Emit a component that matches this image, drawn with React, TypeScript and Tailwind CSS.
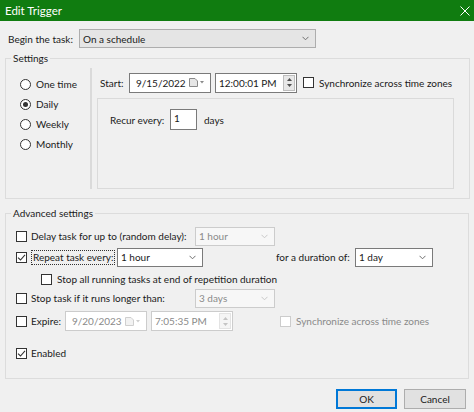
import React from 'react';
import clsx from 'clsx';

function Chevron({ disabled }: { disabled?: boolean }) {
  return (
    <svg width="7" height="5" viewBox="0 0 7 5" className="shrink-0">
      <path d="M0.5 0.8 L3.5 3.8 L6.5 0.8" fill="none" stroke={disabled ? '#c8c8c8' : '#707070'} strokeWidth="1" />
    </svg>
  );
}

function Checkbox({ checked, disabled }: { checked?: boolean; disabled?: boolean }) {
  return (
    <span
      className={clsx(
        'inline-flex h-[11px] w-[11px] shrink-0 items-center justify-center border bg-white',
        disabled ? 'border-[#cccccc]' : 'border-[#333333]'
      )}
    >
      {checked && (
        <svg viewBox="0 0 9 9" className="h-[9px] w-[9px]">
          <path d="M1 4.6 L3.5 7 L8 1.8" fill="none" stroke="#333333" strokeWidth="1.1" />
        </svg>
      )}
    </span>
  );
}

function Radio({ checked }: { checked?: boolean }) {
  return (
    <span className="inline-flex h-[11px] w-[11px] shrink-0 items-center justify-center rounded-full border border-[#333333] bg-white">
      {checked && <span className="h-[5px] w-[5px] rounded-full bg-[#333333]" />}
    </span>
  );
}

function Combo({ value, variant, className }: { value: string; variant: 'list' | 'edit' | 'disabled'; className?: string }) {
  return (
    <div
      className={clsx(
        'flex h-[19px] items-center justify-between border pl-[3px] pr-[6px]',
        variant === 'list' && 'border-[#adadad] bg-[#e5e5e5] text-[#1a1a1a]',
        variant === 'edit' && 'border-[#7a7a7a] bg-white text-[#1a1a1a]',
        variant === 'disabled' && 'border-[#cccccc] bg-[#f7f7f7] text-[#8a8a8a]',
        className
      )}
    >
      <span>{value}</span>
      <Chevron disabled={variant === 'disabled'} />
    </div>
  );
}

function DateBox({ value, disabled }: { value: string; disabled?: boolean }) {
  const c = disabled ? '#cfcfcf' : '#8a8a8a';
  return (
    <div
      className={clsx(
        'flex h-[20px] w-[82px] items-center justify-between border bg-white pl-[6px] pr-[5px]',
        disabled ? 'border-[#cccccc] text-[#8a8a8a]' : 'border-[#7a7a7a] text-[#1a1a1a]'
      )}
    >
      <span>{value}</span>
      <svg width="16" height="9" viewBox="0 0 16 9" className="shrink-0">
        <path d="M0.5 0.5 H6 L8.5 3 V8.5 H0.5 Z" fill={disabled ? '#f2f2f2' : '#e6e6e6'} stroke={c} strokeWidth="1" />
        <path d="M11 3 L15 3 L13 5.5 Z" fill={c} />
      </svg>
    </div>
  );
}

function TimeBox({ value, disabled }: { value: string; disabled?: boolean }) {
  const c = disabled ? '#c4c4c4' : '#505050';
  return (
    <div
      className={clsx(
        'flex h-[20px] w-[82px] items-center justify-between border bg-white pl-[3px] pr-[1px]',
        disabled ? 'border-[#cccccc] text-[#8a8a8a]' : 'border-[#7a7a7a] text-[#1a1a1a]'
      )}
    >
      <span>{value}</span>
      <div
        className={clsx(
          'flex h-[16px] w-[12px] flex-col items-center justify-center gap-[3px] border',
          disabled ? 'border-[#e3e3e3] bg-[#f5f5f5]' : 'border-[#bdbdbd] bg-[#e8e8e8]'
        )}
      >
        <svg width="5" height="3" viewBox="0 0 5 3">
          <path d="M0 3 L2.5 0 L5 3 Z" fill={c} />
        </svg>
        <svg width="5" height="3" viewBox="0 0 5 3">
          <path d="M0 0 L5 0 L2.5 3 Z" fill={c} />
        </svg>
      </div>
    </div>
  );
}

export default function App() {
  return (
    <div className="h-[412px] w-[474px] overflow-hidden bg-[#f0f0f0] font-['Lato',sans-serif] text-[10px] leading-[14px] text-[#1a1a1a]">
      <div className="flex h-[21px] items-center justify-between bg-[#107c10] pl-[5px] pr-[4px] text-[11.5px] text-white">
        <span>Edit Trigger</span>
        <svg width="10" height="10" viewBox="0 0 10 10">
          <path d="M0.5 0.5 L9.5 9.5 M9.5 0.5 L0.5 9.5" stroke="white" strokeWidth="1" />
        </svg>
      </div>

      <div className="px-[5px]">
        <div className="mt-[8px] flex h-[19px] items-center">
          <span className="w-[74px] pl-[3px]">Begin the task:</span>
          <Combo value="On a schedule" variant="list" className="w-[237px]" />
        </div>

        <fieldset className="mt-[3px] w-[465px] border border-[#dcdcdc] pb-[9px]">
          <legend className="ml-[5px] px-[2px]">Settings</legend>
          <div className="flex">
            <div className="flex w-[84px] flex-col pl-[14px] pt-[9px]">
              {['One time', 'Daily', 'Weekly', 'Monthly'].map((l) => (
                <label key={l} className="flex h-[20px] items-center gap-[5px]">
                  <Radio checked={l === 'Daily'} />
                  <span>{l}</span>
                </label>
              ))}
            </div>
            <div className="mt-[3px] border-l-2 border-[#dadada]" />
            <div className="flex flex-col pl-[5px] pt-[7px]">
              <div className="flex h-[21px] items-center pl-[3px]">
                <span className="w-[29px]">Start:</span>
                <DateBox value="9/15/2022" />
                <div className="ml-[4px]">
                  <TimeBox value="12:00:01 PM" />
                </div>
                <label className="ml-[6px] flex items-center gap-[5px]">
                  <Checkbox />
                  <span>Synchronize across time zones</span>
                </label>
              </div>
              <div className="mt-[5px] h-[91px] w-[357px] border border-[#dadada] pl-[12px] pt-[10px]">
                <div className="flex h-[21px] items-center">
                  <span className="w-[60px]">Recur every:</span>
                  <div className="flex h-[21px] w-[27px] items-start border border-[#7a7a7a] bg-white pl-[3px] pt-[1px]">1</div>
                  <span className="ml-[7px]">days</span>
                </div>
              </div>
            </div>
          </div>
        </fieldset>

        <fieldset className="mt-[7px] w-[464px] border border-[#dcdcdc] pb-[17px]">
          <legend className="ml-[5px] px-[2px]">Advanced settings</legend>
          <div className="flex flex-col pl-[10px]">
            <div className="mt-[6px] flex h-[20px] items-center">
              <label className="flex w-[179px] items-center gap-[4px]">
                <Checkbox />
                <span>Delay task for up to (random delay):</span>
              </label>
              <Combo value="1 hour" variant="disabled" className="w-[80px]" />
            </div>

            <div className="mt-[1px] flex h-[20px] items-center">
              <label className="flex w-[101px] items-center gap-[4px]">
                <Checkbox checked />
                <span className="border border-dotted border-[#333333] px-[1px] leading-[13px]">Repeat task every:</span>
              </label>
              <Combo value="1 hour" variant="edit" className="w-[86px]" />
              <span className="ml-[73px] w-[79px]">for a duration of:</span>
              <Combo value="1 day" variant="edit" className="w-[78px]" />
            </div>

            <div className="mt-[4px] flex h-[16px] items-center pl-[25px]">
              <label className="flex items-center gap-[5px]">
                <Checkbox />
                <span>Stop all running tasks at end of repetition duration</span>
              </label>
            </div>

            <div className="mt-[1px] flex h-[20px] items-center">
              <label className="flex w-[179px] items-center gap-[4px]">
                <Checkbox />
                <span>Stop task if it runs longer than:</span>
              </label>
              <Combo value="3 days" variant="disabled" className="w-[80px]" />
            </div>

            <div className="mt-[3px] flex h-[20px] items-center">
              <label className="flex w-[49px] items-center gap-[4px]">
                <Checkbox />
                <span>Expire:</span>
              </label>
              <DateBox value="9/20/2023" disabled />
              <div className="ml-[4px]">
                <TimeBox value="7:05:35 PM" disabled />
              </div>
              <label className="ml-[47px] flex items-center gap-[5px] text-[#8a8a8a]">
                <Checkbox disabled />
                <span>Synchronize across time zones</span>
              </label>
            </div>

            <div className="mt-[14px] flex h-[16px] items-center">
              <label className="flex items-center gap-[4px]">
                <Checkbox checked />
                <span>Enabled</span>
              </label>
            </div>
          </div>
        </fieldset>

        <div className="mt-[10px] flex justify-end gap-[7px] pr-[3px]">
          <button type="button" className="h-[20px] w-[61px] border-2 border-[#0078d7] bg-[#e1e1e1]">
            OK
          </button>
          <button type="button" className="h-[20px] w-[62px] border border-[#adadad] bg-[#e1e1e1]">
            Cancel
          </button>
        </div>
      </div>
    </div>
  );
}
